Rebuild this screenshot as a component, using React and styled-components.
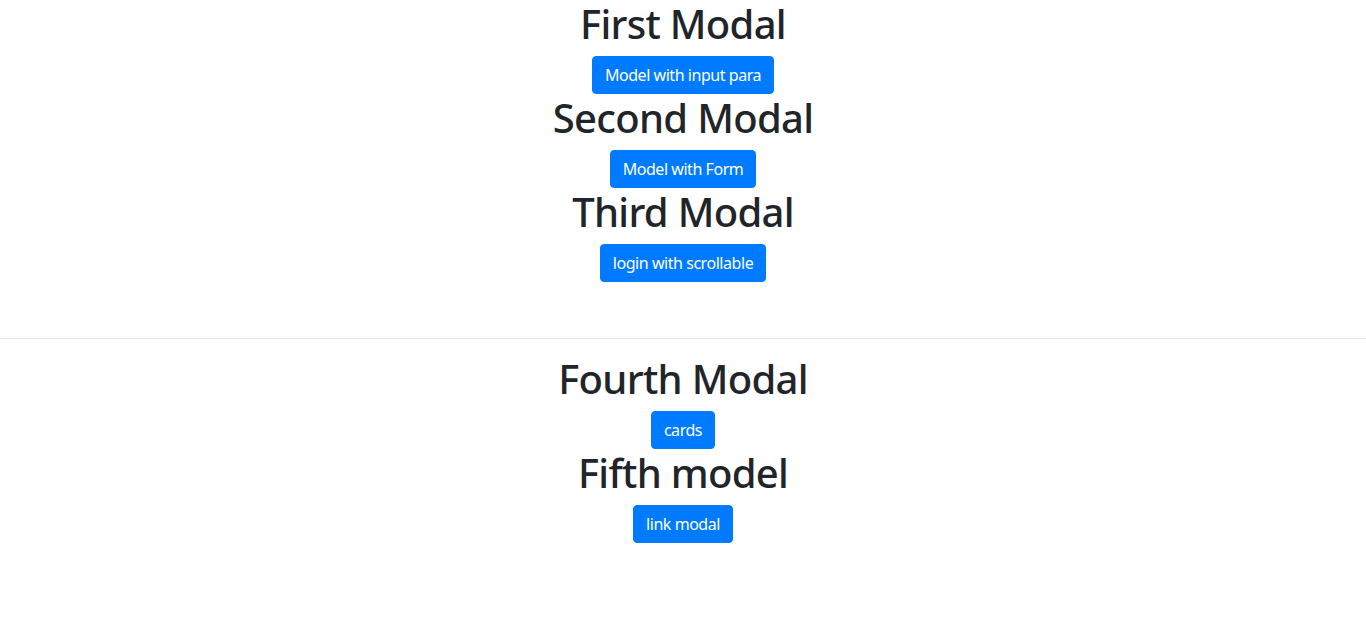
import React from "react";
import styled, { createGlobalStyle } from "styled-components";

const Global = createGlobalStyle`
  html, body { margin: 0; padding: 0; background: #fff; }
  body {
    font-family: "Segoe UI", "Noto Sans", "Liberation Sans", sans-serif;
    font-size: 16px;
    line-height: 1.5;
    color: #212529;
    text-align: center;
  }
`;

const Section = styled.section`
  display: flex;
  flex-direction: column;
  align-items: center;
`;

const Title = styled.h1`
  margin: 0 0 8px;
  font-size: 40px;
  font-weight: 500;
  line-height: 1.2;
  letter-spacing: -0.7px;
  color: #212529;
`;

const Button = styled.button`
  display: inline-block;
  font-family: inherit;
  font-size: 16px;
  line-height: 1.5;
  font-weight: 400;
  letter-spacing: -0.45px;
  color: #fff;
  background: #007bff;
  border: 1px solid #007bff;
  border-radius: 4px;
  padding: 6px 12px;
  cursor: pointer;
`;

const Rule = styled.hr`
  margin: 56px 0 16px;
  border: 0;
  border-top: 1px solid rgba(0, 0, 0, 0.1);
  height: 0;
`;

const Item = ({ title, label }) => (
  <>
    <Title>{title}</Title>
    <Button type="button">{label}</Button>
  </>
);

export default function App() {
  return (
    <>
      <Global />
      <Section>
        <Item title="First Modal" label="Model with input para" />
        <Item title="Second Modal" label="Model with Form" />
        <Item title="Third Modal" label="login with scrollable" />
      </Section>
      <Rule />
      <Section>
        <Item title="Fourth Modal" label="cards" />
        <Item title="Fifth model" label="link modal" />
      </Section>
    </>
  );
}
